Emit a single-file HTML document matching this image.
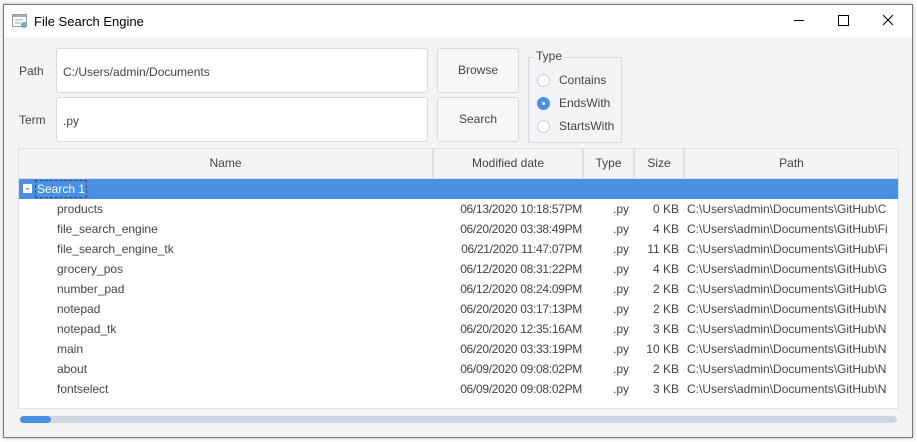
<!DOCTYPE html><html><head><style>
body{margin:0;width:917px;height:442px;background:#fff;font-family:"Liberation Sans",sans-serif;font-size:12px;color:#444;position:relative;overflow:hidden}
.a{position:absolute}
.win{left:3px;top:4px;width:908px;height:432px;border:1px solid #777;background:#f3f4f6;box-shadow:0 0 4px rgba(0,0,0,.3)}
.tb{left:0;top:0;width:908px;height:32px;background:#fff}
.inp{background:#fff;border:1px solid #d4d9e2;border-radius:3px;box-sizing:border-box}
.btn{background:#f6f7f9;border:1px solid #d4d9e2;border-radius:3px;box-sizing:border-box;text-align:center;line-height:42px}
.rad{width:11px;height:11px;border:1px solid #ccd;border-radius:50%;background:#fff}
.row{left:0;width:877px;height:20px;line-height:20px;white-space:nowrap}
.row span{position:absolute}
</style></head><body>
<div class="a win">
<div class="a tb">
 <svg class="a" style="left:8px;top:8px" width="16" height="16"><rect x="0.5" y="1.5" width="14" height="12" fill="#fff" stroke="#99a"/><rect x="1" y="2" width="13" height="2" fill="#aab"/><line x1="3" y1="7" x2="11" y2="7" stroke="#aab"/><line x1="3" y1="10" x2="9" y2="10" stroke="#aab"/><circle cx="12" cy="12" r="3" fill="#7ab"/></svg>
 <div class="a" style="left:30px;top:9px;font-size:13px;color:#000">File Search Engine</div>
 <div class="a" style="left:790px;top:15px;width:10px;height:1px;background:#000"></div>
 <div class="a" style="left:834px;top:10px;width:9px;height:9px;border:1px solid #000"></div>
 <svg class="a" style="left:878px;top:9px" width="12" height="12"><path d="M1 1L11 11M11 1L1 11" stroke="#000"/></svg>
</div>
<div class="a" style="left:15px;top:59px">Path</div>
<div class="a" style="left:15px;top:108px">Term</div>
<div class="a inp" style="left:52px;top:43px;width:372px;height:45px;padding:16px 0 0 6px">C:/Users/admin/Documents</div>
<div class="a inp" style="left:52px;top:92px;width:372px;height:45px;padding:16px 0 0 6px">.py</div>
<div class="a btn" style="left:433px;top:43px;width:82px;height:45px">Browse</div>
<div class="a btn" style="left:433px;top:92px;width:82px;height:45px">Search</div>
<div class="a" style="left:524px;top:52px;width:92px;height:84px;border:1px solid #d4d9e2;border-radius:2px"></div>
<div class="a" style="left:530px;top:44px;background:#f3f4f6;padding:0 2px">Type</div>
<div class="a rad" style="left:533px;top:69px"></div><div class="a" style="left:555px;top:68px">Contains</div>
<div class="a rad" style="left:533px;top:92px;background:#4a90e2;border-color:#4a90e2"></div><div class="a" style="left:538px;top:97px;width:3px;height:3px;background:#fff;border-radius:50%"></div><div class="a" style="left:555px;top:91px">EndsWith</div>
<div class="a rad" style="left:533px;top:115px"></div><div class="a" style="left:555px;top:114px">StartsWith</div>
<div class="a" style="left:14px;top:143px;width:879px;height:259px;background:#fff;border:1px solid #dde0e6">
 <div class="a" style="left:0;top:0;width:879px;height:29px;background:#f3f4f6;border-bottom:1px solid #dde0e6;line-height:29px">
  <span class="a" style="left:0;width:413px;text-align:center;border-right:2px solid #dde0e6">Name</span>
  <span class="a" style="left:415px;width:148px;text-align:center;border-right:2px solid #dde0e6">Modified date</span>
  <span class="a" style="left:565px;width:49px;text-align:center;border-right:2px solid #dde0e6">Type</span>
  <span class="a" style="left:616px;width:48px;text-align:center;border-right:2px solid #dde0e6">Size</span>
  <span class="a" style="left:666px;width:213px;text-align:center">Path</span>
 </div>
 <div class="a row" style="top:30px;width:879px;background:#4a90e2;color:#fff"><span style="left:4px;top:5px;width:9px;height:9px;background:#fff;line-height:8px;color:#4a90e2;text-align:center;font-weight:bold">-</span><span style="left:16px;top:1px;height:16px;line-height:16px;border:1px dashed #446;padding:0 1px">Search 1</span></div>
 <div id="rows"></div>
</div>
<div class="a" style="left:16px;top:411px;width:877px;height:7px;background:#cfd6e3;border-radius:4px"></div>
<div class="a" style="left:16px;top:411px;width:31px;height:7px;background:#4a90e2;border-radius:4px"></div>
</div>
<script>
var d=[["products","06/13/2020 10:18:57PM","0","C"],["file_search_engine","06/20/2020 03:38:49PM","4","Fi"],["file_search_engine_tk","06/21/2020 11:47:07PM","11","Fi"],["grocery_pos","06/12/2020 08:31:22PM","4","G"],["number_pad","06/12/2020 08:24:09PM","2","G"],["notepad","06/20/2020 03:17:13PM","2","N"],["notepad_tk","06/20/2020 12:35:16AM","3","N"],["main","06/20/2020 03:33:19PM","10","N"],["about","06/09/2020 09:08:02PM","2","N"],["fontselect","06/09/2020 09:08:02PM","3","N"]];
var h="";d.forEach(function(r,i){h+='<div class="a row" style="top:'+(50+i*20)+'px"><span style="left:38px">'+r[0]+'</span><span style="left:415px;width:148px;text-align:right;letter-spacing:-0.3px">'+r[1]+'</span><span style="left:565px;width:45px;text-align:right">.py</span><span style="left:616px;width:44px;text-align:right">'+r[2]+' KB</span><span style="left:668px">C:\\Users\\admin\\Documents\\GitHub\\'+r[3]+'</span></div>'});
document.getElementById("rows").innerHTML=h;
</script>
</body></html>
